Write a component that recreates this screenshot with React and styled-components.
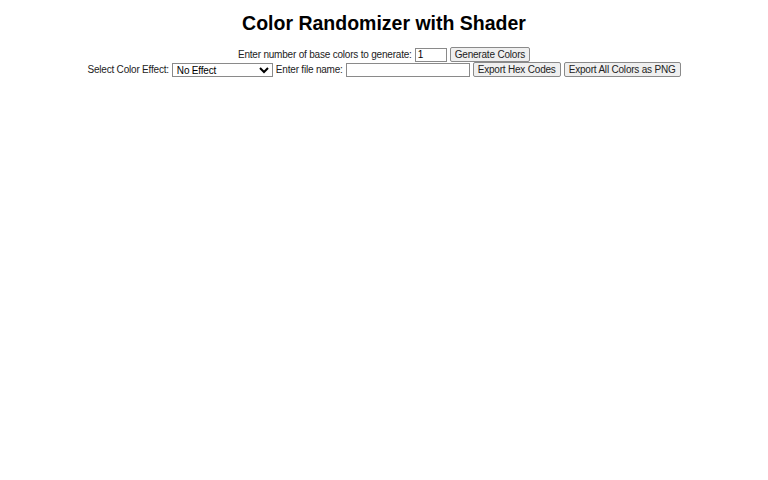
import React, { useState } from 'react'
import styled, { createGlobalStyle } from 'styled-components'

const GlobalStyle = createGlobalStyle`
body {
  margin: 0;
  background: #fff;
  font-family: "Liberation Sans", Arial, sans-serif;
  color: #000;
}
`

const Page = styled.div`
  display: flex;
  flex-direction: column;
  align-items: center;
  padding-top: 12px;
`

const Title = styled.h1`
  margin: 0 0 13px;
  font-size: 19.5px;
  font-weight: bold;
  line-height: 22px;
`

const Row = styled.div`
  display: flex;
  align-items: center;
  justify-content: center;
  gap: 3px;
  font-size: 10px;
  letter-spacing: -0.2px;
  height: 15px;
`

const Label = styled.label`
  color: #222;
`

const Field = styled.input`
  font-family: "Liberation Sans", Arial, sans-serif;
  font-size: 10px;
  letter-spacing: -0.2px;
  width: ${p => p.$w}px;
  height: 14px;
  box-sizing: border-box;
  border: 1px solid #8a8a8a;
  padding: 0 2px;
  margin: 0;
`

const Select = styled.select`
  font-family: "Liberation Sans", Arial, sans-serif;
  font-size: 10px;
  letter-spacing: -0.2px;
  width: 101px;
  height: 14px;
  box-sizing: border-box;
  border: 1px solid #8a8a8a;
  padding: 0;
  margin: 0;
  background: #fff;
`

const Button = styled.button`
  font-family: "Liberation Sans", Arial, sans-serif;
  font-size: 10px;
  letter-spacing: -0.2px;
  height: 15px;
  padding: 0 4px;
  margin: 0;
  box-sizing: border-box;
  border: 1px solid #8a8a8a;
  border-radius: 2px;
  background: #efefef;
  color: #222;
  line-height: 13px;
`

export default function App() {
  const [count, setCount] = useState(1)
  const [effect, setEffect] = useState('none')
  const [fileName, setFileName] = useState('')

  return (
    <Page>
      <GlobalStyle />
      <Title>Color Randomizer with Shader</Title>
      <Row>
        <Label>Enter number of base colors to generate:</Label>
        <Field $w={32} type="text" value={count} onChange={e => setCount(e.target.value)} />
        <Button>Generate Colors</Button>
      </Row>
      <Row>
        <Label>Select Color Effect:</Label>
        <Select value={effect} onChange={e => setEffect(e.target.value)}>
          <option value="none">No Effect</option>
          <option value="darken">Darken</option>
          <option value="lighten">Lighten</option>
        </Select>
        <Label>Enter file name:</Label>
        <Field $w={124} type="text" value={fileName} onChange={e => setFileName(e.target.value)} />
        <Button>Export Hex Codes</Button>
        <Button>Export All Colors as PNG</Button>
      </Row>
    </Page>
  )
}
